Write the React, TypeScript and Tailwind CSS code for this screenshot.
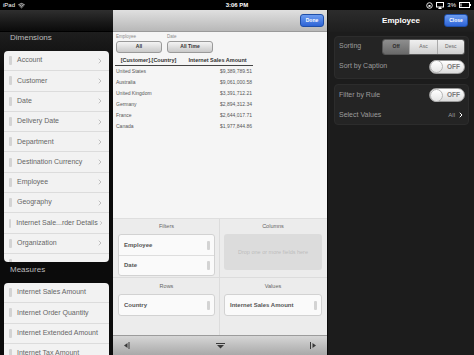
import { ChevronRight, Wifi } from "lucide-react";

const dimensions = [
  "Account",
  "Customer",
  "Date",
  "Delivery Date",
  "Department",
  "Destination Currency",
  "Employee",
  "Geography",
  "Internet Sale...rder Details",
  "Organization",
];

const measures = [
  "Internet Sales Amount",
  "Internet Order Quantity",
  "Internet Extended Amount",
  "Internet Tax Amount",
];

const rows = [
  { country: "United States", amount: "$9,389,789.51" },
  { country: "Australia", amount: "$9,061,000.58" },
  { country: "United Kingdom", amount: "$3,391,712.21" },
  { country: "Germany", amount: "$2,894,312.34" },
  { country: "France", amount: "$2,644,017.71" },
  { country: "Canada", amount: "$1,977,844.86" },
];

const Grip = () => <div className="w-[3px] h-[9px] rounded-[1px] bg-[#d3d3d3]" />;

const FieldRow = (props: { name: string; chevron?: boolean }) => {
  const { name, chevron } = props;
  return (
    <div className="h-[20.3px] flex items-center pl-[5px] pr-[5px] border-b border-[#dcdcdc] shrink-0">
      <Grip />
      <span className="ml-[5px] flex-1 text-[7px] text-[#666666] whitespace-nowrap">{name}</span>
      {chevron && <ChevronRight size={8} strokeWidth={1.5} className="text-[#8a8a8a]" />}
    </div>
  );
};

const BlueButton = (props: { label: string }) => (
  <div className="w-[24px] h-[13px] rounded-[3px] border border-[#1f4fa8] bg-gradient-to-b from-[#6d9cf0] to-[#2d63d6] flex items-center justify-center text-[5px] font-bold text-white">
    {props.label}
  </div>
);

const GrayButton = (props: { label: string }) => (
  <div className="w-[46px] h-[12px] rounded-[3px] border border-[#9a9a9a] bg-gradient-to-b from-[#f4f4f4] to-[#c9c9c9] flex items-center justify-center text-[5px] font-bold text-[#333]">
    {props.label}
  </div>
);

const DropCard = (props: { fields: string[] }) => (
  <div className="rounded-[3px] border border-[#d2d2d2] bg-[#fafafa] overflow-hidden">
    {props.fields.map((f, i) => (
      <div
        key={f}
        className={`h-[20px] flex items-center justify-between pl-[5px] pr-[4px] ${i > 0 ? "border-t border-[#dedede]" : ""}`}
      >
        <span className="text-[6px] font-bold text-[#555] whitespace-nowrap">{f}</span>
        <Grip />
      </div>
    ))}
  </div>
);

const Toggle = () => (
  <div className="w-[36px] h-[14px] rounded-full border border-[#9a9a9a] bg-gradient-to-b from-[#ffffff] to-[#dcdcdc] flex items-center">
    <div className="w-[13px] h-[13px] rounded-full border border-[#b5b5b5] bg-gradient-to-b from-[#ffffff] to-[#e6e6e6]" />
    <span className="flex-1 text-center text-[6.5px] font-bold text-[#7a7a7a]">OFF</span>
  </div>
);

const StatusBar = () => (
  <div className="h-[10px] bg-black flex items-center justify-between px-[3px] text-white text-[6px]">
    <div className="flex items-center gap-[3px] w-[60px]">
      <span>iPad</span>
      <Wifi size={7} strokeWidth={2.5} />
    </div>
    <span className="font-bold">3:06 PM</span>
    <div className="flex items-center justify-end gap-[3px] w-[60px]">
      <svg width="7" height="7" viewBox="0 0 8 8">
        <circle cx="4" cy="4" r="3.2" fill="none" stroke="white" strokeWidth="1" />
        <rect x="2.8" y="3.5" width="2.4" height="2" fill="white" />
      </svg>
      <svg width="8" height="7" viewBox="0 0 8 7">
        <rect x="0.5" y="0.5" width="7" height="4.5" fill="none" stroke="white" strokeWidth="1" />
        <path d="M2 7 L4 4.5 L6 7 Z" fill="white" />
      </svg>
      <span>3%</span>
      <svg width="12" height="6" viewBox="0 0 12 6">
        <rect x="0.5" y="0.5" width="10" height="5" fill="none" stroke="white" strokeWidth="1" />
        <rect x="10.5" y="2" width="1.5" height="2" fill="white" />
        <rect x="1.5" y="1.5" width="1" height="3" fill="white" />
      </svg>
    </div>
  </div>
);

const LeftPanel = () => (
  <div className="w-[113px] flex flex-col bg-[#0d0d0d]">
    <div className="h-[22px] bg-gradient-to-b from-[#2f2f2f] to-[#0b0b0b] border-b border-black" />
    <div className="flex-1 flex flex-col px-[4px] overflow-hidden bg-gradient-to-b from-[#1e1e1e] to-[#0b0b0b] to-[40px]">
      <div className="h-[19px] pt-[1px] pl-[6px] leading-[10px] text-[8px] text-[#bdbdbd]">Dimensions</div>
      <div className="h-[211px] rounded-[4px] bg-[#f2f2f2] overflow-hidden flex flex-col">
        {dimensions.map((d) => (
          <FieldRow key={d} name={d} chevron />
        ))}
        <FieldRow name="" />
      </div>
      <div className="h-[21px] pt-[3px] pl-[6px] leading-[10px] text-[8px] text-[#bdbdbd]">Measures</div>
      <div className="flex-1 rounded-t-[4px] bg-[#f2f2f2] overflow-hidden flex flex-col">
        {measures.map((m) => (
          <FieldRow key={m} name={m} />
        ))}
      </div>
    </div>
  </div>
);

const CenterPanel = () => (
  <div className="w-[214px] flex flex-col bg-[#f5f5f5]">
    <div className="h-[22px] bg-gradient-to-b from-[#e0e0e0] to-[#b8b8b8] border-b border-[#9a9a9a] flex items-center justify-end pr-[3px]">
      <BlueButton label="Done" />
    </div>
    <div className="h-[186px] px-[3px] pt-[2px]">
      <div className="flex gap-[5px] text-[4.5px] text-[#8a8a8a] leading-[5px] h-[7px]">
        <span className="w-[46px]">Employee</span>
        <span>Date</span>
      </div>
      <div className="flex gap-[5px]">
        <GrayButton label="All" />
        <GrayButton label="All Time" />
      </div>
      <div className="w-[138px] -ml-[1px] mt-[3px]">
        <div className="flex h-[10px] items-center text-[5.5px] font-bold text-[#333] border-b border-[#444]">
          <span className="w-[67px] text-center">[Customer].[Country]</span>
          <span className="flex-1 text-center">Internet Sales Amount</span>
        </div>
        {rows.map((r) => (
          <div key={r.country} className="h-[11px] flex items-center justify-between pl-[1px] pr-[1px] text-[5px] text-[#555]">
            <span>{r.country}</span>
            <span>{r.amount}</span>
          </div>
        ))}
      </div>
    </div>
    <div className="flex-1 flex flex-col bg-[#ececec] border-t border-[#dedede]">
      <div className="h-[59px] grid grid-cols-[107px_1fr] border-b border-[#dcdcdc]">
        <div className="pl-[5px] pr-[4px] border-r border-[#dcdcdc]">
          <div className="h-[15px] flex items-center justify-center text-[5.5px] text-[#666]">Filters</div>
          <DropCard fields={["Employee", "Date"]} />
        </div>
        <div className="pl-[4px] pr-[5px]">
          <div className="h-[15px] flex items-center justify-center text-[5.5px] text-[#666]">Columns</div>
          <div className="h-[36px] rounded-[3px] bg-[#dcdcdc] flex items-center justify-center text-[5.5px] text-[#bcbcbc]">
            Drop one or more fields here
          </div>
        </div>
      </div>
      <div className="flex-1 grid grid-cols-[107px_1fr]">
        <div className="pl-[5px] pr-[4px] border-r border-[#dcdcdc]">
          <div className="h-[16px] flex items-center justify-center text-[5.5px] text-[#666]">Rows</div>
          <DropCard fields={["Country"]} />
        </div>
        <div className="pl-[4px] pr-[5px]">
          <div className="h-[16px] flex items-center justify-center text-[5.5px] text-[#666]">Values</div>
          <DropCard fields={["Internet Sales Amount"]} />
        </div>
      </div>
      <div className="h-[20px] bg-gradient-to-b from-[#d6d6d6] to-[#a9a9a9] border-t border-[#9c9c9c] flex items-center justify-between px-[11px]">
        <svg width="6" height="7" viewBox="0 0 6 7">
          <path d="M0 3.5 L3.5 1 L3.5 6 Z" fill="#3a3a3a" />
          <rect x="4.5" y="0" width="1" height="7" fill="#3a3a3a" />
        </svg>
        <svg width="9" height="6" viewBox="0 0 9 6">
          <rect x="0" y="0" width="9" height="1" fill="#3a3a3a" />
          <path d="M1 2 L8 2 L4.5 5.5 Z" fill="#3a3a3a" />
        </svg>
        <svg width="6" height="7" viewBox="0 0 6 7">
          <rect x="0" y="0" width="1" height="7" fill="#3a3a3a" />
          <path d="M6 3.5 L2.5 1 L2.5 6 Z" fill="#3a3a3a" />
        </svg>
      </div>
    </div>
  </div>
);

const SettingRow = (props: { label: string; children?: React.ReactNode; h: string }) => (
  <div className={`${props.h} flex items-center justify-between pl-[4px] pr-[3px]`}>
    <span className="text-[7px] text-[#9c9c9c] whitespace-nowrap">{props.label}</span>
    {props.children}
  </div>
);

const RightPanel = () => (
  <div className="flex-1 flex flex-col bg-[#1c1c1c] border-l border-[#0a0a0a]">
    <div className="h-[22px] relative bg-gradient-to-b from-[#2c2c2c] to-[#1e1e1e] flex items-center justify-center">
      <span className="text-[8px] font-bold text-white">Employee</span>
      <div className="absolute right-[6px] top-[4px]">
        <BlueButton label="Close" />
      </div>
    </div>
    <div className="px-[5px] pl-[6px]">
      <div className="mt-[4px] h-[43px] rounded-[4px] bg-[#242424] border border-[#2c2c2c]">
        <SettingRow label="Sorting" h="h-[19px]">
          <div className="w-[83px] h-[16px] rounded-[3px] border border-[#555] overflow-hidden flex text-[5px]">
            <div className="flex-1 bg-gradient-to-b from-[#8e8e8e] to-[#6a6a6a] flex items-center justify-center font-bold text-[#2a2a2a]">Off</div>
            <div className="flex-1 bg-gradient-to-b from-[#f0f0f0] to-[#cfcfcf] border-l border-[#aaa] flex items-center justify-center text-[#666]">Asc</div>
            <div className="flex-1 bg-gradient-to-b from-[#f0f0f0] to-[#cfcfcf] border-l border-[#aaa] flex items-center justify-center text-[#666]">Desc</div>
          </div>
        </SettingRow>
        <SettingRow label="Sort by Caption" h="h-[21px]">
          <Toggle />
        </SettingRow>
      </div>
      <div className="mt-[5px] h-[41px] rounded-[4px] bg-[#242424] border border-[#2c2c2c]">
        <SettingRow label="Filter by Rule" h="h-[20px]">
          <Toggle />
        </SettingRow>
        <SettingRow label="Select Values" h="h-[20px]">
          <div className="flex items-center gap-[2px]">
            <span className="text-[6px] text-[#9c9c9c]">All</span>
            <ChevronRight size={8} strokeWidth={3} className="text-white" />
          </div>
        </SettingRow>
      </div>
    </div>
  </div>
);

const App = () => {
  return (
    <div className="w-[474px] h-[355px] overflow-hidden bg-black font-['Liberation_Sans',Arial,sans-serif] flex flex-col">
      <StatusBar />
      <div className="flex-1 flex overflow-hidden">
        <LeftPanel />
        <CenterPanel />
        <RightPanel />
      </div>
    </div>
  );
};

export default App;
